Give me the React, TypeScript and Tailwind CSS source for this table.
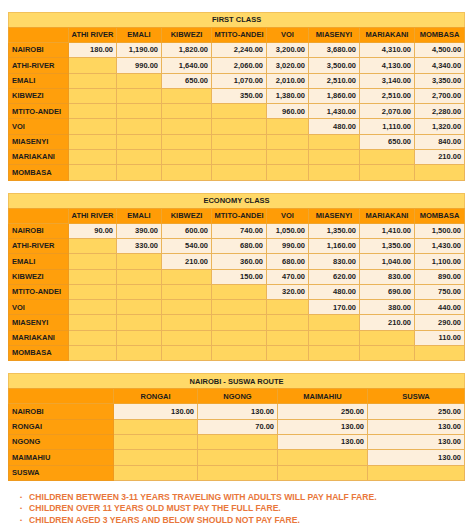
const firstCols = ['ATHI RIVER', 'EMALI', 'KIBWEZI', 'MTITO-ANDEI', 'VOI', 'MIASENYI', 'MARIAKANI', 'MOMBASA'];
const rowNames = ['NAIROBI', 'ATHI-RIVER', 'EMALI', 'KIBWEZI', 'MTITO-ANDEI', 'VOI', 'MIASENYI', 'MARIAKANI', 'MOMBASA'];
const mainWidths = [60, 48, 45, 50, 55, 42, 51, 55, 50];

const firstClass: string[][] = [
  ['180.00', '1,190.00', '1,820.00', '2,240.00', '3,200.00', '3,680.00', '4,310.00', '4,500.00'],
  ['', '990.00', '1,640.00', '2,060.00', '3,020.00', '3,500.00', '4,130.00', '4,340.00'],
  ['', '', '650.00', '1,070.00', '2,010.00', '2,510.00', '3,140.00', '3,350.00'],
  ['', '', '', '350.00', '1,380.00', '1,860.00', '2,510.00', '2,700.00'],
  ['', '', '', '', '960.00', '1,430.00', '2,070.00', '2,280.00'],
  ['', '', '', '', '', '480.00', '1,110.00', '1,320.00'],
  ['', '', '', '', '', '', '650.00', '840.00'],
  ['', '', '', '', '', '', '', '210.00'],
  ['', '', '', '', '', '', '', ''],
];

const economy: string[][] = [
  ['90.00', '390.00', '600.00', '740.00', '1,050.00', '1,350.00', '1,410.00', '1,500.00'],
  ['', '330.00', '540.00', '680.00', '990.00', '1,160.00', '1,350.00', '1,430.00'],
  ['', '', '210.00', '360.00', '680.00', '830.00', '1,040.00', '1,100.00'],
  ['', '', '', '150.00', '470.00', '620.00', '830.00', '890.00'],
  ['', '', '', '', '320.00', '480.00', '690.00', '750.00'],
  ['', '', '', '', '', '170.00', '380.00', '440.00'],
  ['', '', '', '', '', '', '210.00', '290.00'],
  ['', '', '', '', '', '', '', '110.00'],
  ['', '', '', '', '', '', '', ''],
];

const suswaCols = ['RONGAI', 'NGONG', 'MAIMAHIU', 'SUSWA'];
const suswaRows = ['NAIROBI', 'RONGAI', 'NGONG', 'MAIMAHIU', 'SUSWA'];
const suswaWidths = [105, 84, 80, 90, 97];
const suswa: string[][] = [
  ['130.00', '130.00', '250.00', '250.00'],
  ['', '70.00', '130.00', '130.00'],
  ['', '', '130.00', '130.00'],
  ['', '', '', '130.00'],
  ['', '', '', ''],
];

type FareTableProps = {
  title: string;
  cols: string[];
  rows: string[];
  widths: number[];
  data: string[][];
};

const FareTable = ({ title, cols, rows, widths, data }: FareTableProps) => (
  <table className="w-[456px] table-fixed border-collapse border border-[#f2c15a] text-[7.5px] font-bold leading-none text-[#1c1c1c]">
    <colgroup>
      {widths.map((w, i) => (
        <col key={i} style={{ width: w }} />
      ))}
    </colgroup>
    <tbody>
      <tr className="h-[15px] bg-[#ffd968]">
        <td colSpan={widths.length} className="text-center">
          {title}
        </td>
      </tr>
      <tr className="h-[15px] bg-[#ff9c06]">
        <td className="border border-[#f0a52e]" />
        {cols.map((c) => (
          <td key={c} className="border border-[#f0a52e] text-center">
            {c}
          </td>
        ))}
      </tr>
      {rows.map((r, ri) => (
        <tr key={r} className="h-[15.3px]">
          <td className="border border-[#ef9a1e] bg-[#ff9f0c] pl-[3px]">{r}</td>
          {data[ri].map((v, ci) => (
            <td
              key={ci}
              className={
                v
                  ? 'border border-[#eab45a] bg-[#fdefdc] pr-[3px] text-right'
                  : 'border border-[#eab45a] bg-[#ffd65f] pr-[3px] text-right'
              }
            >
              {v}
            </td>
          ))}
        </tr>
      ))}
    </tbody>
  </table>
);

const notes = [
  'CHILDREN BETWEEN 3-11 YEARS TRAVELING WITH ADULTS WILL PAY HALF FARE.',
  'CHILDREN OVER 11 YEARS OLD MUST PAY THE FULL FARE.',
  'CHILDREN AGED 3 YEARS AND BELOW SHOULD NOT PAY FARE.',
];

const App = () => {
  return (
    <div className="min-h-[531px] w-[474px] bg-white pl-[8px] pt-[12px] font-['Liberation_Sans',Arial,sans-serif]">
      <div className="flex flex-col gap-[12px]">
        <FareTable title="FIRST CLASS" cols={firstCols} rows={rowNames} widths={mainWidths} data={firstClass} />
        <FareTable title="ECONOMY CLASS" cols={firstCols} rows={rowNames} widths={mainWidths} data={economy} />
        <FareTable title="NAIROBI - SUSWA ROUTE" cols={suswaCols} rows={suswaRows} widths={suswaWidths} data={suswa} />
      </div>
      <ul className="mt-[12px] flex flex-col gap-[2.5px] pl-[12px] text-[8.6px] font-bold leading-[9px] text-[#e9773b]">
        {notes.map((n) => (
          <li key={n} className="flex items-center gap-[7px]">
            <span className="text-[6px]">•</span>
            <span>{n}</span>
          </li>
        ))}
      </ul>
    </div>
  );
};

export default App;
